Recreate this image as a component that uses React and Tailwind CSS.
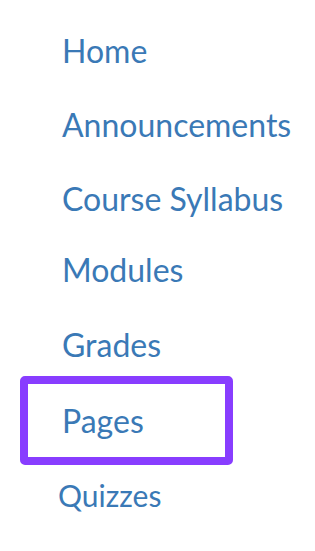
const items = [
  { label: 'Home', h: 'h-[73px] leading-[73px]' },
  { label: 'Announcements', h: 'h-[75px] leading-[75px]' },
  { label: 'Course Syllabus', h: 'h-[70px] leading-[74px]' },
  { label: 'Modules', h: 'h-[75px] leading-[75px]' },
];

export default function App() {
  return (
    <div className="w-[315px] h-[551px] bg-white overflow-hidden" style={{ fontFamily: 'Lato, "Open Sans", sans-serif' }}>
      <nav className="pt-[14px] pl-[20px]">
        <ul className="text-[#3a79b6] text-[32px]">
          {items.map((it) => (
            <li key={it.label} className={`${it.h} pl-[42px] whitespace-nowrap`}>
              {it.label}
            </li>
          ))}
          <li className="h-[69px] leading-[75px] pl-[42px]">Grades</li>
          <li className="w-[213px] h-[89px] border-8 border-[#883dff] rounded-[5px] pl-[34px] leading-[73px]">
            Pages
          </li>
          <li className="pl-[38px] pt-[12px] text-[30px] leading-[36px]">Quizzes</li>
        </ul>
      </nav>
    </div>
  );
}
